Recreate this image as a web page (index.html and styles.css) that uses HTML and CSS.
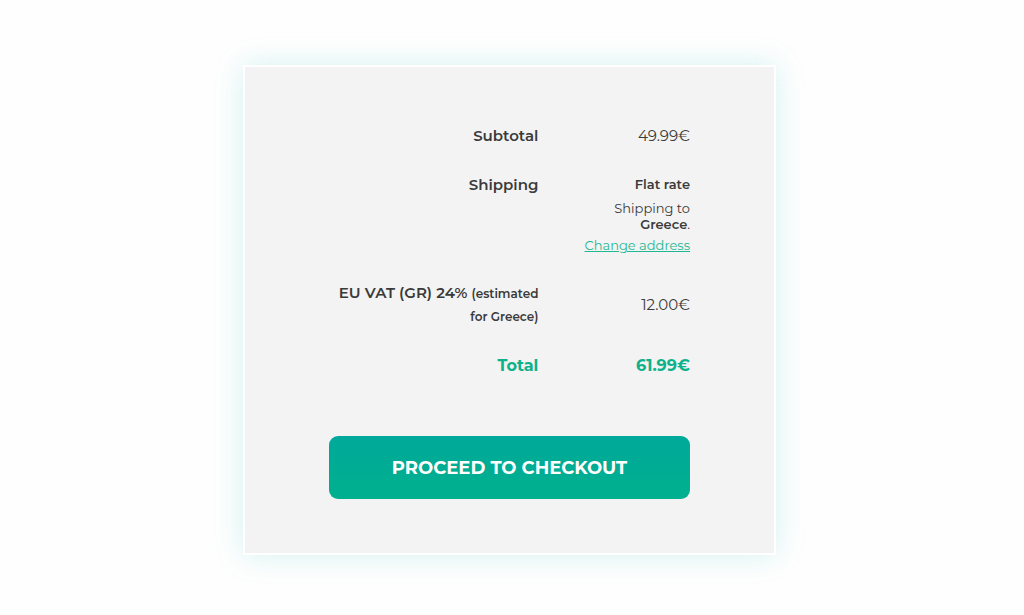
FILE: index.html
```html
<!DOCTYPE html>
<html lang="en">
<head>
    <meta charset="UTF-8">
    <meta name="viewport" content="width=device-width, initial-scale=1">
    <title>Cart totals</title>
    <link rel="stylesheet" href="styles.css">
</head>
<body>
    <main class="cart-totals">
        <table class="totals-table">
            <tbody>
                <tr>
                    <th scope="row">Subtotal</th>
                    <td>49.99€</td>
                </tr>
                <tr class="shipping">
                    <th scope="row">Shipping</th>
                    <td>
                        <strong class="shipping-method">Flat rate</strong>
                        <p class="destination">Shipping to <strong>Greece</strong>.</p>
                        <a href="#" class="change-address">Change address</a>
                    </td>
                </tr>
                <tr>
                    <th scope="row">EU VAT (GR) 24% <small>(estimated for Greece)</small></th>
                    <td>12.00€</td>
                </tr>
                <tr class="order-total">
                    <th scope="row">Total</th>
                    <td>61.99€</td>
                </tr>
            </tbody>
        </table>
        <button type="button" class="checkout-button">PROCEED TO CHECKOUT</button>
    </main>
</body>
</html>
```

FILE: styles.css
```css
* {
    box-sizing: border-box;
}

body {
    margin: 0;
    padding: 65px 21px 60px 16px;
    background: #fefefe;
    color: #3a3a3a;
    font-family: Montserrat, Inter, "Open Sans", sans-serif;
    font-size: 14px;
    line-height: 22px;
}

.cart-totals {
    max-width: 533px;
    margin: 0 auto;
    padding: 44px 84px 54px;
    background: #f3f3f3;
    border: 2px solid #fff;
    box-shadow: 0 0 28px rgba(0, 175, 175, 0.17);
}

.totals-table {
    width: 100%;
    table-layout: fixed;
    border-collapse: collapse;
    text-align: right;
}

.totals-table th,
.totals-table td {
    padding: 14px 0 13px;
}

.totals-table td {
    font-size: 15px;
}

.totals-table th {
    width: 58%;
    font-size: 15px;
    font-weight: 600;
    text-align: right;
}

.totals-table small {
    font-size: 12px;
}

/* Shipping row */
.shipping th,
.shipping td {
    vertical-align: top;
}

.totals-table .shipping td {
    padding-bottom: 15px;
    font-size: 13px;
    line-height: 16px;
}

.shipping strong {
    font-weight: 600;
}

.shipping-method {
    display: block;
    line-height: 20px;
}

.destination {
    max-width: 80px;
    margin: 6px 0 5px auto;
}

.change-address {
    color: #1fb892;
    text-decoration: underline;
}

/* Total row */
.totals-table .order-total th,
.totals-table .order-total td {
    color: #0db28b;
    font-size: 16px;
    font-weight: 700;
}

.checkout-button {
    display: block;
    width: 100%;
    margin-top: 46px;
    padding: 21px 16px 19px;
    background: linear-gradient(#00a99a, #00b08e);
    border: 0;
    border-radius: 9px;
    color: #fff;
    font-family: inherit;
    font-size: 18px;
    font-weight: 700;
    line-height: 23px;
    cursor: pointer;
}
```
